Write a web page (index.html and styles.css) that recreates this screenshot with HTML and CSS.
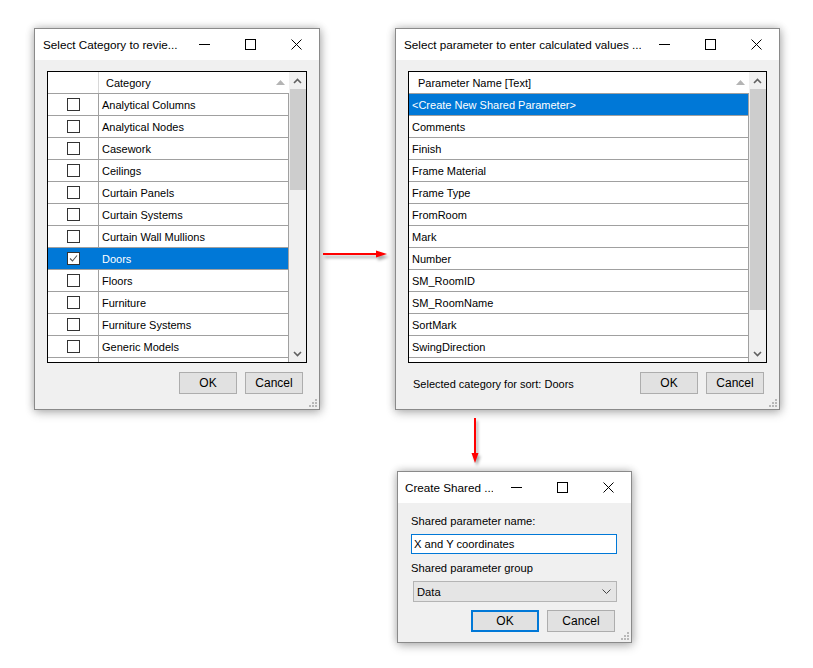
FILE: index.html
```html
<!DOCTYPE html>
<html>
<head>
<meta charset="utf-8">
<link rel="stylesheet" href="styles.css">
</head>
<body>
<div class="desk">

  <div class="win win-cat">
    <div class="titlebar">
      <span class="title">Select Category to revie...</span>
      <div class="caps">
        <span class="cap"><svg width="11" height="11" viewBox="0 0 11 11"><path d="M0 5.5H11" stroke="#000" stroke-width="1"/></svg></span>
        <span class="cap"><svg width="11" height="11" viewBox="0 0 11 11"><rect x="0.5" y="0.5" width="10" height="10" fill="none" stroke="#000" stroke-width="1"/></svg></span>
        <span class="cap"><svg width="11" height="11" viewBox="0 0 11 11"><path d="M0.5 0.5L10.5 10.5M10.5 0.5L0.5 10.5" stroke="#000" stroke-width="1"/></svg></span>
      </div>
    </div>
    <div class="body">
      <div class="grid grid-cat">
        <div class="list">
          <div class="row head"><div class="c-chk"></div><div class="c-name hd-cat"><span>Category</span><svg class="sort" width="9" height="5" viewBox="0 0 9 5"><path d="M0 5L4.5 0L9 5Z" fill="#b4b4b4"/></svg></div></div>
          <div class="row"><div class="c-chk"><span class="chk"></span></div><div class="c-name">Analytical Columns</div></div>
          <div class="row"><div class="c-chk"><span class="chk"></span></div><div class="c-name">Analytical Nodes</div></div>
          <div class="row"><div class="c-chk"><span class="chk"></span></div><div class="c-name">Casework</div></div>
          <div class="row"><div class="c-chk"><span class="chk"></span></div><div class="c-name">Ceilings</div></div>
          <div class="row"><div class="c-chk"><span class="chk"></span></div><div class="c-name">Curtain Panels</div></div>
          <div class="row"><div class="c-chk"><span class="chk"></span></div><div class="c-name">Curtain Systems</div></div>
          <div class="row"><div class="c-chk"><span class="chk"></span></div><div class="c-name">Curtain Wall Mullions</div></div>
          <div class="row sel"><div class="c-chk"><span class="chk"><svg width="11" height="11" viewBox="0 0 11 11"><path d="M2 5.5L4.5 8L9 2.5" fill="none" stroke="#555" stroke-width="1.1"/></svg></span></div><div class="c-name">Doors</div></div>
          <div class="row"><div class="c-chk"><span class="chk"></span></div><div class="c-name">Floors</div></div>
          <div class="row"><div class="c-chk"><span class="chk"></span></div><div class="c-name">Furniture</div></div>
          <div class="row"><div class="c-chk"><span class="chk"></span></div><div class="c-name">Furniture Systems</div></div>
          <div class="row"><div class="c-chk"><span class="chk"></span></div><div class="c-name">Generic Models</div></div>
          <div class="row"><div class="c-chk"></div><div class="c-name"></div></div>
        </div>
        <div class="vscroll">
          <div class="sb-btn"><svg width="9" height="6" viewBox="0 0 9 6"><path d="M1 5L4.5 1.5L8 5" fill="none" stroke="#606060" stroke-width="1.6"/></svg></div>
          <div class="sb-track"><div class="thumb thumb-cat"></div></div>
          <div class="sb-btn"><svg width="9" height="6" viewBox="0 0 9 6"><path d="M1 1L4.5 4.5L8 1" fill="none" stroke="#606060" stroke-width="1.6"/></svg></div>
        </div>
      </div>
      <div class="actions act-cat">
        <button class="btn">OK</button>
        <button class="btn">Cancel</button>
      </div>
    </div>
    <svg class="grip" width="8" height="8" viewBox="0 0 8 8"><g fill="#b8b8b8"><rect x="6" y="0" width="2" height="2"/><rect x="3" y="3" width="2" height="2"/><rect x="6" y="3" width="2" height="2"/><rect x="0" y="6" width="2" height="2"/><rect x="3" y="6" width="2" height="2"/><rect x="6" y="6" width="2" height="2"/></g></svg>
  </div>

  <div class="win win-par">
    <div class="titlebar">
      <span class="title">Select parameter to enter calculated values ...</span>
      <div class="caps">
        <span class="cap"><svg width="11" height="11" viewBox="0 0 11 11"><path d="M0 5.5H11" stroke="#000" stroke-width="1"/></svg></span>
        <span class="cap"><svg width="11" height="11" viewBox="0 0 11 11"><rect x="0.5" y="0.5" width="10" height="10" fill="none" stroke="#000" stroke-width="1"/></svg></span>
        <span class="cap"><svg width="11" height="11" viewBox="0 0 11 11"><path d="M0.5 0.5L10.5 10.5M10.5 0.5L0.5 10.5" stroke="#000" stroke-width="1"/></svg></span>
      </div>
    </div>
    <div class="body">
      <div class="grid grid-par">
        <div class="list">
          <div class="row head"><div class="c-name hd-par"><span>Parameter Name [Text]</span><svg class="sort" width="9" height="5" viewBox="0 0 9 5"><path d="M0 5L4.5 0L9 5Z" fill="#b4b4b4"/></svg></div></div>
          <div class="row sel"><div class="c-name">&lt;Create New Shared Parameter&gt;</div></div>
          <div class="row"><div class="c-name">Comments</div></div>
          <div class="row"><div class="c-name">Finish</div></div>
          <div class="row"><div class="c-name">Frame Material</div></div>
          <div class="row"><div class="c-name">Frame Type</div></div>
          <div class="row"><div class="c-name">FromRoom</div></div>
          <div class="row"><div class="c-name">Mark</div></div>
          <div class="row"><div class="c-name">Number</div></div>
          <div class="row"><div class="c-name">SM_RoomID</div></div>
          <div class="row"><div class="c-name">SM_RoomName</div></div>
          <div class="row"><div class="c-name">SortMark</div></div>
          <div class="row"><div class="c-name">SwingDirection</div></div>
          <div class="row"><div class="c-name"></div></div>
        </div>
        <div class="vscroll">
          <div class="sb-btn"><svg width="9" height="6" viewBox="0 0 9 6"><path d="M1 5L4.5 1.5L8 5" fill="none" stroke="#606060" stroke-width="1.6"/></svg></div>
          <div class="sb-track"><div class="thumb thumb-par"></div></div>
          <div class="sb-btn"><svg width="9" height="6" viewBox="0 0 9 6"><path d="M1 1L4.5 4.5L8 1" fill="none" stroke="#606060" stroke-width="1.6"/></svg></div>
        </div>
      </div>
      <div class="actions act-par">
        <span class="status">Selected category for sort: Doors</span>
        <button class="btn">OK</button>
        <button class="btn">Cancel</button>
      </div>
    </div>
    <svg class="grip" width="8" height="8" viewBox="0 0 8 8"><g fill="#b8b8b8"><rect x="6" y="0" width="2" height="2"/><rect x="3" y="3" width="2" height="2"/><rect x="6" y="3" width="2" height="2"/><rect x="0" y="6" width="2" height="2"/><rect x="3" y="6" width="2" height="2"/><rect x="6" y="6" width="2" height="2"/></g></svg>
  </div>

  <div class="win win-new">
    <div class="titlebar">
      <span class="title title-new">Create Shared ...</span>
      <div class="caps">
        <span class="cap"><svg width="11" height="11" viewBox="0 0 11 11"><path d="M0 5.5H11" stroke="#000" stroke-width="1"/></svg></span>
        <span class="cap"><svg width="11" height="11" viewBox="0 0 11 11"><rect x="0.5" y="0.5" width="10" height="10" fill="none" stroke="#000" stroke-width="1"/></svg></span>
        <span class="cap"><svg width="11" height="11" viewBox="0 0 11 11"><path d="M0.5 0.5L10.5 10.5M10.5 0.5L0.5 10.5" stroke="#000" stroke-width="1"/></svg></span>
      </div>
    </div>
    <div class="body body-new">
      <div class="lbl">Shared parameter name:</div>
      <div class="input">X and Y coordinates</div>
      <div class="lbl lbl2">Shared parameter group</div>
      <div class="combo"><span>Data</span><svg width="9" height="5" viewBox="0 0 9 5"><path d="M0.5 0.5L4.5 4.5L8.5 0.5" fill="none" stroke="#444" stroke-width="1"/></svg></div>
      <div class="actions act-new">
        <button class="btn btn-new btn-default">OK</button>
        <button class="btn btn-new">Cancel</button>
      </div>
    </div>
    <svg class="grip" width="8" height="8" viewBox="0 0 8 8"><g fill="#b8b8b8"><rect x="6" y="0" width="2" height="2"/><rect x="3" y="3" width="2" height="2"/><rect x="6" y="3" width="2" height="2"/><rect x="0" y="6" width="2" height="2"/><rect x="3" y="6" width="2" height="2"/><rect x="6" y="6" width="2" height="2"/></g></svg>
  </div>

  <svg class="arrow arrow-h" width="80" height="24" viewBox="0 0 80 24">
    <path d="M5 10H60" stroke="#ff0000" stroke-width="2"/>
    <path d="M58 6.5L69 10L58 13.5Z" fill="#ff0000"/>
  </svg>
  <svg class="arrow arrow-v" width="24" height="60" viewBox="0 0 24 60">
    <path d="M10 5V42" stroke="#ff0000" stroke-width="2"/>
    <path d="M6.5 40L10 50L13.5 40Z" fill="#ff0000"/>
  </svg>
</div>
</body>
</html>
```

FILE: styles.css
```css
* { box-sizing: border-box; margin: 0; padding: 0; }
html, body { width: 813px; height: 668px; background: #fff; overflow: hidden; }
body { font-family: "Liberation Sans", Arial, sans-serif; font-size: 11px; color: #000; }
.desk { position: relative; width: 813px; height: 668px; }

.win {
  position: absolute;
  background: #f0f0f0;
  border: 1px solid #8a8a8a;
  box-shadow: 0 0 8px rgba(0,0,0,.24), 1px 3px 10px rgba(0,0,0,.2);
  display: flex;
  flex-direction: column;
}
.win-cat { left: 34px; top: 28px; width: 286px; height: 382px; }
.win-par { left: 395px; top: 28px; width: 385px; height: 382px; }
.win-new { left: 397px; top: 471px; width: 235px; height: 172px; }

.titlebar { height: 31px; flex: none; background: #fff; display: flex; align-items: center; }
.title { flex: 1; padding-left: 8px; font-size: 11.7px; white-space: nowrap; overflow: hidden; }
.title-new { padding-left: 7px; }
.caps { display: flex; height: 100%; }
.cap { width: 46px; display: flex; align-items: center; justify-content: center; }
.cap svg { display: block; }

.body { flex: 1; padding: 11px 12px 0 12px; display: flex; flex-direction: column; }

.grid { height: 292px; flex: none; border: 1px solid #000; display: flex; background: #fff; }
.list { flex: 1; overflow: hidden; display: flex; flex-direction: column; }
.row { height: 22px; flex: none; display: flex; border-bottom: 1px solid #a0a0a0; background: #fff; }
.c-chk { width: 51px; flex: none; border-right: 1px solid #a0a0a0; display: flex; align-items: center; justify-content: center; }
.c-name { flex: 1; border-right: 1px solid #a0a0a0; padding-left: 3px; display: flex; align-items: center; white-space: nowrap; overflow: hidden; }
.row.head .c-chk { border-right-color: #d8d8d8; }
.row.head .c-name { border-right: none; }
.hd-cat { padding-left: 7px; padding-right: 4px; }
.hd-par { padding-left: 9px; padding-right: 4px; }
.sort { margin-left: auto; display: block; }
.row.sel { background: #0078d7; color: #fff; }
.row.sel .c-chk { border-right-color: #0078d7; }
.row.sel .c-name { border-right-color: #a0a0a0; }
.chk { width: 13px; height: 13px; border: 1px solid #333; background: #fff; display: flex; align-items: center; justify-content: center; }
.chk svg { display: block; }

.vscroll { width: 17px; flex: none; background: #f0f0f0; display: flex; flex-direction: column; }
.sb-btn { height: 17px; flex: none; display: flex; align-items: center; justify-content: center; }
.sb-btn svg { display: block; }
.sb-track { flex: 1; padding-left: 1px; }
.thumb { background: #cdcdcd; }
.thumb-cat { height: 101px; }
.thumb-par { height: 221px; }

.actions { display: flex; align-items: center; justify-content: flex-end; gap: 8px; margin-top: 9px; }
.act-cat { padding-right: 4px; }
.act-par { padding-right: 3px; }
.status { flex: 1; padding-left: 5px; white-space: nowrap; padding-top: 2px; }
.btn {
  width: 58px; height: 22px;
  background: #e1e1e1; border: 1px solid #adadad;
  font-family: "Liberation Sans", Arial, sans-serif; font-size: 12px; color: #000;
}

.body-new { padding: 11px 0 0 13px; }
.lbl { height: 14px; line-height: 14px; white-space: nowrap; font-size: 11.2px; }
.lbl2 { margin-top: 7px; }
.input {
  margin-top: 6px; width: 206px; height: 20px;
  border: 1px solid #0078d7; background: #fff;
  padding-left: 2px; line-height: 18px; font-size: 11.2px; white-space: nowrap;
}
.combo {
  margin-top: 6px; margin-left: 2px; width: 204px; height: 21px;
  border: 1px solid #b4b4b4; background: #e5e5e5;
  display: flex; align-items: center; padding: 0 5px 0 3px; font-size: 11.2px;
}
.combo svg { margin-left: auto; display: block; }
.act-new { margin-top: 8px; padding-right: 16px; }
.btn-new { width: 68px; height: 22px; }
.btn-default { border: 2px solid #0078d7; }

.grip { position: absolute; right: 2px; bottom: 2px; }

.arrow { position: absolute; filter: drop-shadow(2px 3px 1.5px rgba(0,0,0,.35)); }
.arrow-h { left: 318px; top: 244px; }
.arrow-v { left: 465px; top: 413px; }
```
